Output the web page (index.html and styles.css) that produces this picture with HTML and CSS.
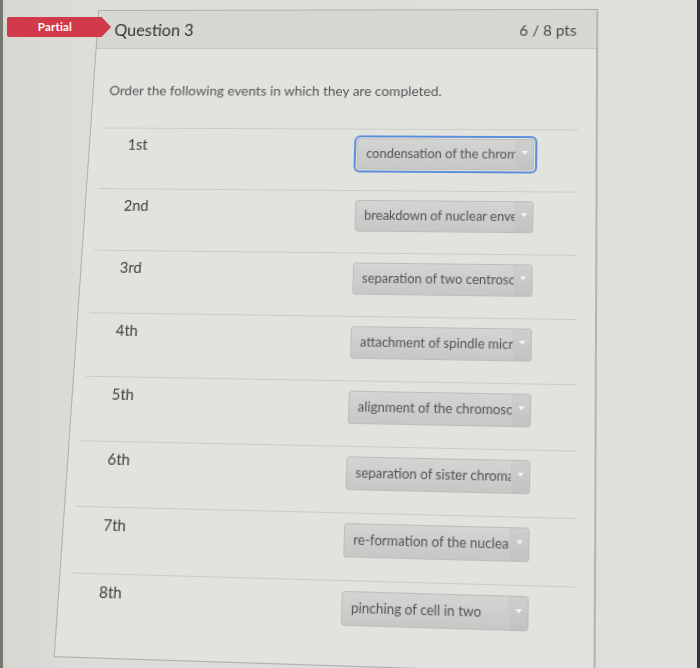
FILE: index.html
```html
<!DOCTYPE html>
<html lang="en">
<head>
    <meta charset="UTF-8">
    <meta name="viewport" content="width=device-width, initial-scale=1.0">
    <title>Question 3</title>
    <link rel="stylesheet" href="styles.css">
</head>
<body>
<div class="quiz-page">
    <div class="status-flag">Partial</div>
    <div class="question-card">
        <div class="question-header">
            <span class="question-name">Question 3</span>
            <span class="question-points">6 / 8 pts</span>
        </div>
        <div class="question-body">
            <p class="question-text">Order the following events in which they are completed.</p>
            <div class="match-list">
                <div class="match-row">
                    <div class="match-label">1st</div>
                    <div class="answer-select is-focused">
                        <span class="answer-text">condensation of the chromosomes</span>
                        <span class="answer-arrow"></span>
                    </div>
                </div>
                <div class="match-row">
                    <div class="match-label">2nd</div>
                    <div class="answer-select">
                        <span class="answer-text">breakdown of nuclear envelope</span>
                        <span class="answer-arrow"></span>
                    </div>
                </div>
                <div class="match-row">
                    <div class="match-label">3rd</div>
                    <div class="answer-select">
                        <span class="answer-text">separation of two centrosomes</span>
                        <span class="answer-arrow"></span>
                    </div>
                </div>
                <div class="match-row">
                    <div class="match-label">4th</div>
                    <div class="answer-select">
                        <span class="answer-text">attachment of spindle microtubules</span>
                        <span class="answer-arrow"></span>
                    </div>
                </div>
                <div class="match-row">
                    <div class="match-label">5th</div>
                    <div class="answer-select">
                        <span class="answer-text">alignment of the chromosomes</span>
                        <span class="answer-arrow"></span>
                    </div>
                </div>
                <div class="match-row">
                    <div class="match-label">6th</div>
                    <div class="answer-select">
                        <span class="answer-text">separation of sister chromatids</span>
                        <span class="answer-arrow"></span>
                    </div>
                </div>
                <div class="match-row">
                    <div class="match-label">7th</div>
                    <div class="answer-select">
                        <span class="answer-text">re-formation of the nuclear envelope</span>
                        <span class="answer-arrow"></span>
                    </div>
                </div>
                <div class="match-row">
                    <div class="match-label">8th</div>
                    <div class="answer-select">
                        <span class="answer-text">pinching of cell in two</span>
                        <span class="answer-arrow"></span>
                    </div>
                </div>
            </div>
        </div>
    </div>
</div>
</body>
</html>
```

FILE: styles.css
```css
/* цвета и шрифт страницы */
:root {
    --page-bg: #dcdcd9;
    --card-bg: #e2e2df;
    --head-bg: #d6d6d3;
    --line: #aeaeab;
    --row-line: #cbcbc8;
    --text: #3c3c3c;
    --muted: #555555;
    --flag: #d03a4a;
    --focus: #5b8dd8;
    --font-main: 'Lato', 'Liberation Sans', sans-serif;
}
html, body {
    height: 100%;
    overflow: hidden; /* карточка наклонена и уходит за нижний край */
}
body {
    margin: 0;
    background: linear-gradient(90deg, #d6d6d3 0%, var(--page-bg) 12%, #dfdfdc 100%);
    border-left: 3px solid #77776f;
    border-right: 3px solid #34343a;
    box-sizing: border-box;
    font-family: var(--font-main);
    color: var(--text);
}
.quiz-page {
    display: flex;
    align-items: flex-start;
    padding: 10px 0 0 4px;
}
/* красный флажок "Partial" */
.status-flag {
    position: relative;
    z-index: 2;
    width: 104px;
    height: 20px;
    margin: 7px -13px 0 0;
    padding-right: 8px;
    box-sizing: border-box;
    background: var(--flag);
    clip-path: polygon(0 0, 91% 0, 100% 50%, 91% 100%, 0 100%);
    border-radius: 2px 0 0 2px;
    color: #fff;
    font-size: 11.5px;
    font-weight: 700;
    line-height: 20px;
    text-align: center;
    letter-spacing: 0.2px;
}
/* карточка вопроса, снятая под углом */
.question-card {
    width: 500px;
    height: 645px;
    box-sizing: border-box;
    background: var(--card-bg);
    border: 1px solid var(--line);
    border-right: 0;
    box-shadow: inset -2px 0 0 #b6b6b3;
    outline: 1px solid transparent;
    transform-origin: 0 0;
    transform: matrix3d(0.97422, -0.0020044, 0, -0.00005175, -0.063829, 0.92544, 0, -0.00012038, 0, 0, 1, 0, 0.2568, 0.026, 0, 1);
}
.question-header {
    height: 41px;
    box-sizing: border-box;
    display: flex;
    align-items: center;
    justify-content: space-between;
    padding: 2px 19px 0 17px;
    margin-right: 2px;
    background: var(--head-bg);
    border-bottom: 1px solid #c3c3c0;
}
.question-name {
    font-size: 16.5px;
    color: #333;
}
.question-points {
    font-size: 15px;
    color: #4a4a4a;
}
.question-body {
    padding: 35px 0 0;
}
.question-text {
    margin: 0 0 30px 16px;
    font-size: 13.5px;
    line-height: 18px;
    color: var(--muted);
}
.match-list {
    margin: 0 19px 0 11px;
}
.match-row {
    display: flex;
    align-items: flex-start;
    height: 63px;
    box-sizing: border-box;
    padding: 8px 42px 0 27px;
    border-top: 1px solid var(--row-line);
}
.match-label {
    flex: 1;
    font-size: 14.5px;
    line-height: 17px;
    color: #404040;
}
/* выпадающий список с ответом */
.answer-select {
    display: flex;
    width: 172px;
    height: 32px;
    margin-top: 1px;
    box-sizing: border-box;
    border: 1px solid #bdbdbb;
    border-radius: 3px;
    background: linear-gradient(#d4d4d2, #c7c7c5);
    overflow: hidden;
}
.answer-select.is-focused {
    box-shadow: 0 0 0 1px #e6e6e4, 0 0 0 3px var(--focus);
}
.answer-text {
    flex: 1;
    overflow: hidden;
    white-space: nowrap;
    padding-left: 8px;
    font-size: 12.5px;
    line-height: 30px;
    color: #555;
}
.answer-arrow {
    width: 17px;
    background: linear-gradient(#cfcfcd, #c2c2c0);
    border-left: 1px solid #c8c8c6;
    display: flex;
    justify-content: center;
    padding-top: 11px;
    box-sizing: border-box;
}
.answer-arrow::before {
    content: "";
    width: 0;
    height: 0;
    border-left: 3px solid transparent;
    border-right: 3px solid transparent;
    border-top: 4px solid #f4f4f4;
}
```
